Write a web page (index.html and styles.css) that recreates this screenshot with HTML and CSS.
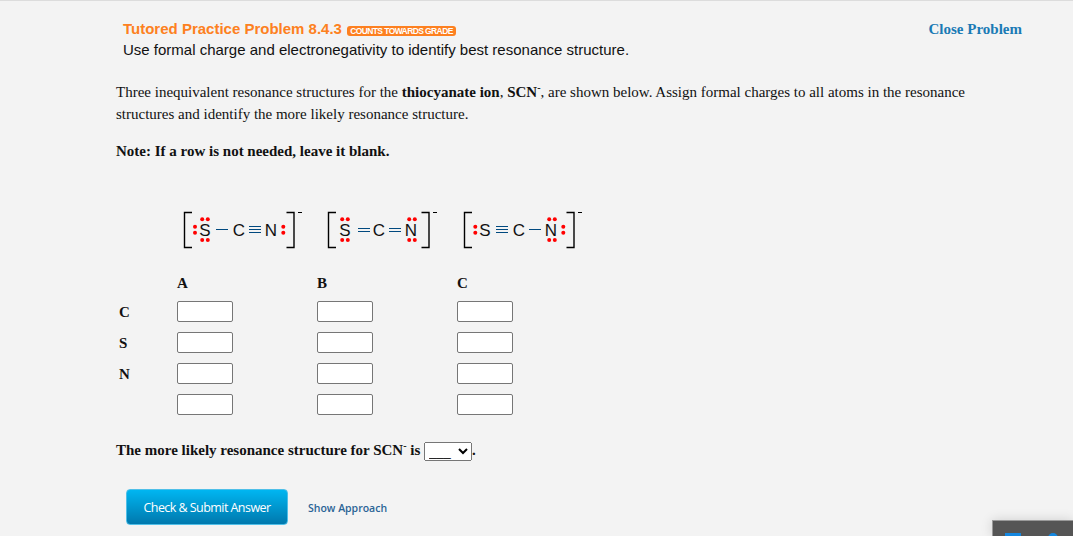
FILE: index.html
```html
<!doctype html>
<html lang="en">
<head>
	<meta charset="UTF-8">
	<title>Tutored Practice Problem 8.4.3</title>
	<link rel="stylesheet" href="styles.css">
</head>
<body>

<header class="problem-head">
	<div>
		<h1>Tutored Practice Problem 8.4.3 <span class="badge">COUNTS TOWARDS GRADE</span></h1>
		<p class="subtitle">Use formal charge and electronegativity to identify best resonance structure.</p>
	</div>
	<a class="close" href="#">Close Problem</a>
</header>

<section class="question">
	<p class="intro">Three inequivalent resonance structures for the <b>thiocyanate ion</b>, <b>SCN<sup>-</sup></b>, are shown below. Assign formal charges to all atoms in the resonance<br>structures and identify the more likely resonance structure.</p>
	<p class="note">Note: If a row is not needed, leave it blank.</p>

	<svg class="structures" width="420" height="50" viewBox="180 205 420 50">
		<defs>
			<g id="pair-h"><circle cx="-2.8" r="2"/><circle cx="2.8" r="2"/></g>
			<g id="pair-v"><circle cy="-3" r="2"/><circle cy="3" r="2"/></g>
		</defs>

		<!-- A -->
		<path class="bracket" d="M192 212.500h-7.500v35h7.500M286.500 212.500h7.500v35h-7.500"/>
		<path class="charge" d="M298 212.500h4"/>
		<text x="205" y="236">S</text><text x="239" y="236">C</text><text x="271" y="236">N</text>
		<path class="bond" d="M216 229.500h12M249 226.500h12M249 229.500h12M249 232.500h12"/>
		<g class="dots">
			<use href="#pair-h" x="205" y="219.300"/><use href="#pair-h" x="205" y="240"/>
			<use href="#pair-v" x="195" y="229.700"/><use href="#pair-v" x="283.300" y="229.700"/>
		</g>

		<!-- B -->
		<path class="bracket" d="M336 212.500h-7.500v35h7.500M421.500 212.500h7.500v35h-7.500"/>
		<path class="charge" d="M433 212.500h4"/>
		<text x="345" y="236">S</text><text x="379" y="236">C</text><text x="411" y="236">N</text>
		<path class="bond" d="M358 228.500h12M358 231.500h12M389 228.500h12M389 231.500h12"/>
		<g class="dots">
			<use href="#pair-h" x="345" y="219.300"/><use href="#pair-h" x="345" y="240"/>
			<use href="#pair-h" x="412" y="219.300"/><use href="#pair-h" x="412" y="240"/>
		</g>

		<!-- C -->
		<path class="bracket" d="M472 212.500h-7.500v35h7.500M566.500 212.500h7.500v35h-7.500"/>
		<path class="charge" d="M578 212.500h4"/>
		<text x="485" y="236">S</text><text x="519" y="236">C</text><text x="551" y="236">N</text>
		<path class="bond" d="M496 226.500h12M496 229.500h12M496 232.500h12M529 229.500h12"/>
		<g class="dots">
			<use href="#pair-h" x="552" y="219.300"/><use href="#pair-h" x="552" y="240"/>
			<use href="#pair-v" x="475.300" y="229.700"/><use href="#pair-v" x="563.300" y="229.700"/>
		</g>
	</svg>

	<div class="charges">
		<span></span><b>A</b><b>B</b><b>C</b>
		<b class="atom">C</b><input type="text"><input type="text"><input type="text">
		<b class="atom">S</b><input type="text"><input type="text"><input type="text">
		<b class="atom">N</b><input type="text"><input type="text"><input type="text">
		<span></span><input type="text"><input type="text"><input type="text">
	</div>

	<p class="pick"><b>The more likely resonance structure for SCN<sup>-</sup> is</b> <select><option>___</option></select><b>.</b></p>

	<div class="actions">
		<button class="submit">Check &amp; Submit Answer</button>
		<a class="approach" href="#">Show Approach</a>
	</div>
</section>

<div class="dock">
	<span class="dock-square"></span>
	<span class="dock-dot"></span>
</div>

</body>
</html>
```

FILE: styles.css
```css
body {
	margin: 0;
	height: 536px;
	overflow: hidden;
	position: relative;
	background: #f3f3f3;
	border-top: 1px solid #dcdcdc;
	box-sizing: border-box;
	font-family: "Liberation Serif", serif;
	font-size: 15px;
	color: #111;
}
.problem-head {
	display: flex;
	justify-content: space-between;
	padding: 19px 51px 0 123px;
}
h1 {
	margin: 0;
	font-family: "Liberation Sans", sans-serif;
	font-size: 15px;
	font-weight: bold;
	line-height: 18px;
	color: #fd8020;
}
.badge {
	display: inline-block;
	margin-left: 1px;
	padding: 1px 3px 0;
	background: #fd8020;
	border-radius: 3px;
	color: #fff;
	font-size: 8.5px;
	line-height: 9px;
	letter-spacing: -0.6px;
}
.subtitle {
	margin: 2px 0 0;
	font-family: "Liberation Sans", sans-serif;
	font-size: 15px;
	line-height: 20px;
}
.close {
	color: #1a7ab5;
	font-weight: bold;
	text-decoration: none;
	line-height: 19px;
}
.question {
	padding: 0 0 0 116px;
}
.intro {
	margin: 21px 0 0;
	line-height: 22px;
}
sup {
	font-size: 10px;
	line-height: 0;
}
.note {
	margin: 18px 0 0;
	font-weight: bold;
	line-height: 17px;
}
.structures {
	display: block;
	margin: 45px 0 0 64px;
}
.structures text {
	font-family: "Liberation Sans", sans-serif;
	font-size: 17px;
	text-anchor: middle;
	fill: #111;
}
.bracket {
	fill: none;
	stroke: #000;
	stroke-width: 1.4;
}
.charge {
	fill: none;
	stroke: #000;
	stroke-width: 1;
}
.bond {
	fill: none;
	stroke: #00497f;
	stroke-width: 1;
}
.dots {
	fill: #f00;
}
.charges {
	display: grid;
	grid-template-columns: 61px repeat(3, 140px);
	grid-template-rows: 20px repeat(4, 21px);
	row-gap: 10px;
	align-items: center;
	margin-top: 16px;
	font-size: 15px;
	line-height: 16px;
}
.charges > b:not(.atom) {
	padding-top: 4px;
}
.atom {
	padding-left: 3px;
}
.charges input {
	width: 56px;
	height: 21px;
	box-sizing: border-box;
	margin: 0;
	background: #fff;
	border: 1px solid #767676;
	border-radius: 2px;
}
.pick {
	margin: 25px 0 0;
	line-height: 20px;
}
.pick select {
	width: 48px;
	height: 19px;
	font-size: 13px;
	font-family: "Liberation Sans", sans-serif;
	vertical-align: middle;
}
.actions {
	display: flex;
	align-items: center;
	gap: 20px;
	margin: 28px 0 0 10px;
}
.submit {
	width: 162px;
	height: 36px;
	padding: 0;
	border: 1px solid #4fbfe8;
	border-radius: 4px;
	background: linear-gradient(to bottom, #00b6f1 0%, #0078ad 100%);
	color: #fff;
	font-family: "Open Sans", sans-serif;
	font-size: 12.5px;
	letter-spacing: -0.55px;
}
.approach {
	padding-top: 2px;
	color: #2a6496;
	font-family: "Open Sans", sans-serif;
	font-size: 10.500px;
	font-weight: 600;
	text-decoration: none;
}
.dock {
	position: absolute;
	left: 992px;
	top: 519px;
	width: 81px;
	height: 16px;
	background: #555;
	border-top: 1px solid #999;
	border-left: 1px solid #999;
	box-shadow: 0 0 12px rgba(0, 0, 0, .15);
	box-sizing: border-box;
	overflow: hidden;
}
.dock-square {
	position: absolute;
	left: 12px;
	top: 12px;
	width: 16px;
	height: 8px;
	background: #1487e0;
}
.dock-dot {
	position: absolute;
	left: 55px;
	top: 12px;
	width: 10px;
	height: 10px;
	border-radius: 50%;
	background: #1487e0;
}
```
